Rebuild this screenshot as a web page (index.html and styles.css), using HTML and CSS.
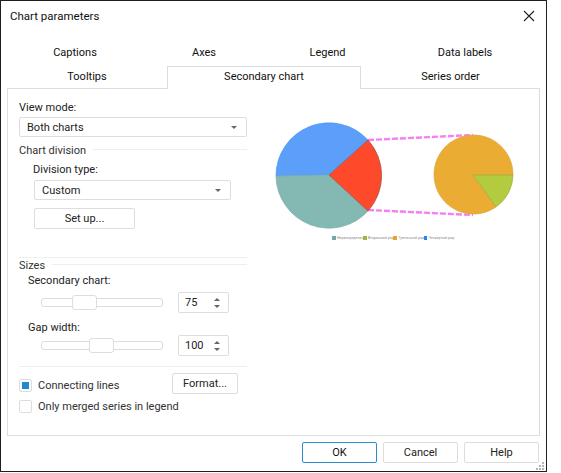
FILE: index.html
```html
<!DOCTYPE html>
<html lang="en">
<head>
	<meta charset="UTF-8">
	<title>Chart parameters</title>
	<link rel="stylesheet" href="styles.css">
</head>
<body>
	<div class="dialog">
		<div class="title-bar">
			<span class="title">Chart parameters</span>
			<svg class="close" width="12" height="12" viewBox="0 0 12 12"><path d="M1 1L11 11M11 1L1 11" stroke="#222" stroke-width="1.1" fill="none"/></svg>
		</div>
		<div class="tabs tabs-top">
			<a class="tab">Captions</a>
			<a class="tab">Axes</a>
			<a class="tab">Legend</a>
			<a class="tab">Data labels</a>
		</div>
		<div class="tabs tabs-bottom">
			<a class="tab">Tooltips</a>
			<a class="tab active">Secondary chart</a>
			<a class="tab">Series order</a>
		</div>
		<div class="panel">
			<div class="left">
				<div class="label">View mode:</div>
				<div class="combo combo-view">Both charts<i class="arrow"></i></div>

				<div class="group-head head-division"><span>Chart division</span><i class="line"></i></div>
				<div class="label label-type">Division type:</div>
				<div class="combo combo-type">Custom<i class="arrow"></i></div>
				<div class="btn btn-setup">Set up...</div>

				<div class="rule rule-sizes"></div>
				<div class="group-head head-sizes"><span>Sizes</span><i class="line"></i></div>
				<div class="label label-size">Secondary chart:</div>
				<div class="slider-row row-secondary">
					<div class="slider"><i class="thumb thumb-secondary"></i></div>
					<div class="spin">75<span class="spin-arrows"><i class="up"></i><i class="down"></i></span></div>
				</div>
				<div class="label label-size label-gap">Gap width:</div>
				<div class="slider-row">
					<div class="slider"><i class="thumb thumb-gap"></i></div>
					<div class="spin">100<span class="spin-arrows"><i class="up"></i><i class="down"></i></span></div>
				</div>
				<div class="rule rule-bottom"></div>

				<div class="check-row row-lines">
					<i class="check checked"></i>
					<span class="check-text">Connecting lines</span>
					<div class="btn btn-format">Format...</div>
				</div>
				<div class="check-row row-merged">
					<i class="check"></i>
					<span class="check-text">Only merged series in legend</span>
				</div>
			</div>
			<svg class="chart" width="270" height="130" viewBox="262 115 270 130">
				<g stroke="#f97ff0" stroke-width="2.4" stroke-dasharray="6 2" fill="none">
					<path d="M368 140L473 135"/>
					<path d="M368 210L473 215"/>
				</g>
				<path d="M329 175L276 176A53 53 0 0 1 368 140Z" fill="#5b9ffa" stroke="#4a96f5" stroke-width=".7"/>
				<path d="M329 175L368 211A53 53 0 0 1 276 176Z" fill="#84b9b3" stroke="#78aaa5" stroke-width=".7"/>
				<path d="M329 175L368 140A53 53 0 0 1 368 211Z" fill="#fe4a2b" stroke="#8a5a50" stroke-width=".7"/>
				<path d="M473 175L496 207A39.5 39.5 0 1 1 513 175Z" fill="#ebac33" stroke="#dba540" stroke-width=".7"/>
				<path d="M473 175L513 175A39.5 39.5 0 0 1 496 207Z" fill="#b2cb3f" stroke="#a0ac3e" stroke-width=".7"/>
				<g class="legend">
					<rect x="332" y="236" width="4" height="4" fill="#6fa8a4"/>
					<text x="337" y="239.2">Нераспределено</text>
					<rect x="363" y="236" width="4" height="4" fill="#9fb83a"/>
					<text x="368" y="239.2">Вторичный ряд</text>
					<rect x="393" y="236" width="4" height="4" fill="#eba22e"/>
					<text x="398.5" y="239.2">Третичный ряд</text>
					<rect x="424" y="236" width="3" height="4" fill="#2288f0"/>
					<text x="428.5" y="239.2">Четвертый ряд</text>
				</g>
			</svg>
		</div>
		<div class="footer">
			<div class="btn btn-foot btn-default">OK</div>
			<div class="btn btn-foot">Cancel</div>
			<div class="btn btn-foot">Help</div>
		</div>
		<svg class="grip" width="9" height="9" viewBox="0 0 9 9" fill="#b5b5b5">
			<rect x="6" y="0" width="2" height="2"/>
			<rect x="3" y="3" width="2" height="2"/><rect x="6" y="3" width="2" height="2"/>
			<rect x="0" y="6" width="2" height="2"/><rect x="3" y="6" width="2" height="2"/><rect x="6" y="6" width="2" height="2"/>
		</svg>
	</div>
</body>
</html>
```

FILE: styles.css
```css
html, body {
	margin: 0;
	padding: 0;
	background: #fff;
}
body {
	font-family: Roboto, "Liberation Sans", sans-serif;
	font-size: 11px;
	color: #222;
}
* {
	box-sizing: border-box;
}
i {
	display: block;
}

.dialog {
	position: relative;
	width: 547px;
	height: 472px;
	border: 1px solid #1f1f1f;
	padding: 0 6px;
	background: #fff;
}
.title-bar {
	display: flex;
	justify-content: space-between;
	align-items: center;
	height: 30px;
	padding: 0 3px 0 3px;
}
.title {
	font-size: 11.5px;
	color: #111;
}
.close {
	margin-right: 2px;
}

.tabs {
	display: grid;
	text-align: center;
	color: #111;
}
.tab {
	display: block;
	line-height: 21px;
}
.tabs-top {
	grid-template-columns: 136px 122px 125px 150px;
	padding-top: 11px;
	height: 35px;
}
.tabs-bottom {
	grid-template-columns: 160px 194px 179px;
	height: 22px;
}
.tab.active {
	position: relative;
	z-index: 1;
	height: 23px;
	background: #fff;
	border: 1px solid #ddd;
	border-bottom: 0;
	line-height: 19px;
}

.panel {
	display: flex;
	height: 348px;
	padding: 10px 0 0 11px;
	border: 1px solid #ddd;
}
.left {
	width: 228px;
	flex: none;
}
.chart {
	flex: none;
	margin: 16px 0 0 15px;
}
.legend text {
	font-size: 3.6px;
	fill: #8a8a8a;
}

.label {
	height: 16px;
	line-height: 18px;
	color: #222;
}
.combo {
	position: relative;
	height: 20px;
	line-height: 20px;
	padding-left: 7px;
	border: 1px solid #ddd;
	border-radius: 2px;
}
.combo-view {
	margin-top: 2px;
}
.combo-type {
	width: 197px;
	margin: 3px 0 0 15px;
}
.arrow {
	position: absolute;
	right: 9px;
	top: 8px;
	border-left: 3px solid transparent;
	border-right: 3px solid transparent;
	border-top: 3px solid #666;
}

.group-head {
	display: flex;
	align-items: flex-start;
	height: 16px;
	line-height: 18px;
	color: #333;
}
.group-head .line {
	flex: 1;
	height: 1px;
	margin: 7px 0 0 7px;
	background: #eee;
}
.head-division {
	margin-top: 5px;
}
.label-type {
	margin-top: 3px;
	padding-left: 14px;
}
.btn {
	height: 21px;
	line-height: 19px;
	text-align: center;
	border: 1px solid #ddd;
	border-radius: 2px;
}
.btn-setup {
	width: 101px;
	margin: 8px 0 0 15px;
}
.rule {
	height: 1px;
	background: #eee;
}
.rule-sizes {
	margin-top: 28px;
}
.head-sizes {
	height: 14px;
	line-height: 16px;
}
.head-sizes .line {
	margin-top: 6px;
}
.label-size {
	padding-left: 9px;
}
.label-gap {
	margin-top: 6px;
}

.slider-row {
	display: flex;
	align-items: center;
	margin-top: 4px;
	padding-left: 22px;
}
.label-gap + .slider-row {
	margin-top: 0;
}
.slider {
	position: relative;
	width: 122px;
	height: 9px;
	margin-right: 15px;
	border: 1px solid #ddd;
	border-radius: 3px;
}
.thumb {
	position: absolute;
	top: -4px;
	width: 25px;
	height: 15px;
	background: #fff;
	border: 1px solid #ddd;
	border-radius: 3px;
}
.thumb-secondary {
	left: 30px;
}
.thumb-gap {
	left: 47px;
}
.spin {
	position: relative;
	width: 51px;
	height: 21px;
	line-height: 20px;
	padding-left: 6px;
	border: 1px solid #ddd;
	border-radius: 2px;
}
.spin-arrows {
	position: absolute;
	right: 8px;
	top: 5px;
}
.spin-arrows .up {
	border-left: 3px solid transparent;
	border-right: 3px solid transparent;
	border-bottom: 3px solid #666;
	margin-bottom: 4px;
}
.spin-arrows .down {
	border-left: 3px solid transparent;
	border-right: 3px solid transparent;
	border-top: 3px solid #666;
}
.rule-bottom {
	margin-top: 10px;
}

.check-row {
	display: flex;
	align-items: center;
	color: #333;
}
.check {
	flex: none;
	width: 13px;
	height: 13px;
	margin-right: 6px;
	border: 1px solid #ddd;
	border-radius: 2px;
}
.check.checked {
	border-width: 3px;
	border-color: #fff;
	background: #1f8ad0;
	outline: 1px solid #ddd;
	outline-offset: -1px;
}
.row-lines {
	height: 21px;
	margin-top: 6px;
	padding-top: 3px;
}
.check-text {
	line-height: 16px;
	padding-top: 2px;
}
.btn-format {
	width: 66px;
	margin: -3px 9px 0 auto;
	color: #222;
}
.row-merged {
	height: 16px;
	margin-top: 4px;
}

.footer {
	display: flex;
	justify-content: flex-end;
	gap: 6px;
	margin-top: 6px;
	padding-right: 1px;
}
.btn-foot {
	width: 75px;
}
.btn-default {
	border-color: #2a8cd0;
	color: #111;
}
.grip {
	position: absolute;
	right: 1px;
	bottom: 0;
}
```
